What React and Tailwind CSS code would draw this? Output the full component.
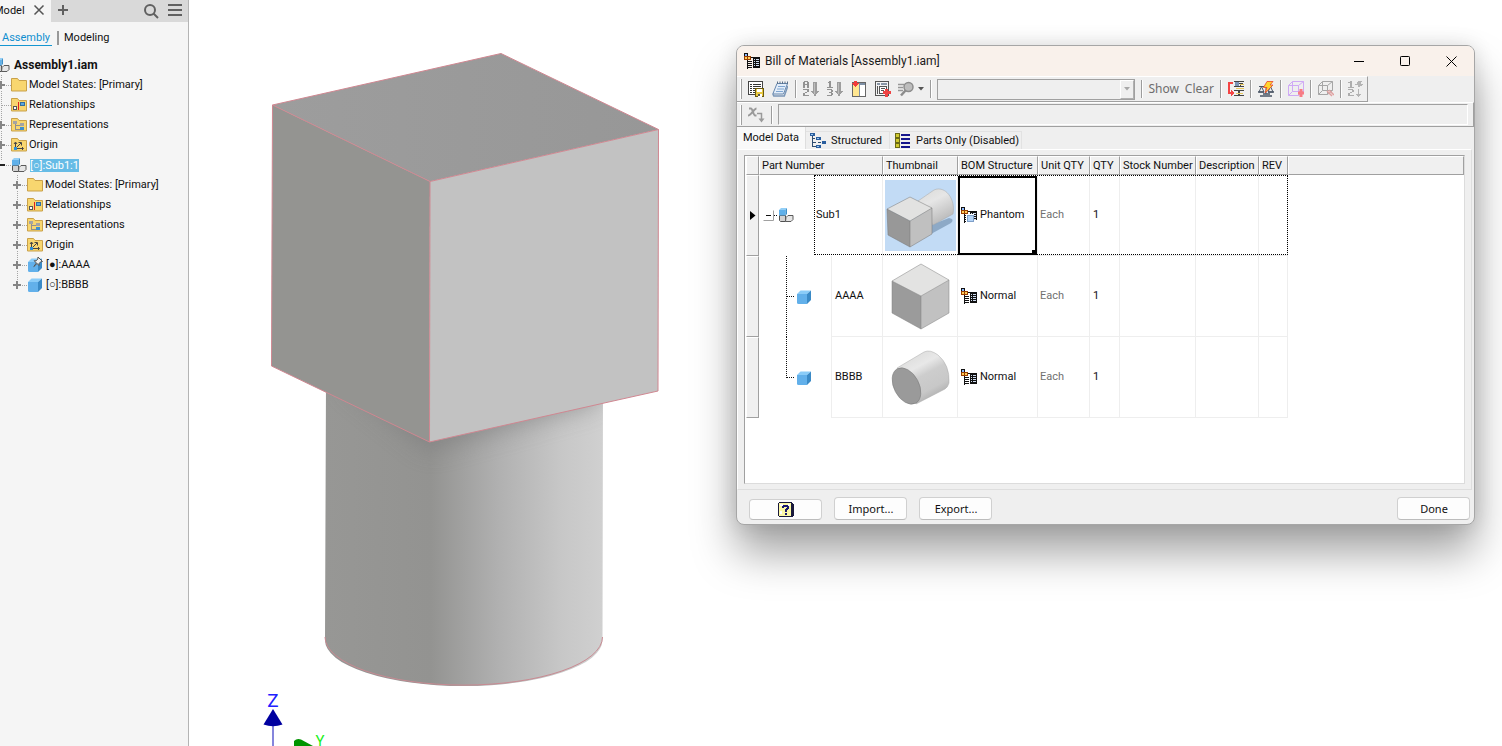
import React from "react";

/* ---------- tree icons ---------- */

function AssemblyIcon() {
  return (
    <svg width="16" height="16" viewBox="0 0 16 16" className="shrink-0" aria-hidden="true">
      <path d="M1.5 8.500h6v6h-5l-1-1z" fill="#d2d2d2" stroke="#505050" />
      <path d="M8 10.500l2-2h5v4l-2 2H7.500z" fill="#e6e6e6" stroke="#5a5a5a" />
      <path d="M1 3L3 1h6L7.500 3z" fill="#93cff7" />
      <path d="M1 3h6.500v5.500H1z" fill="#5fb0ea" />
      <path d="M7.500 3L9 1v6L7.500 8.500z" fill="#3c8fc9" />
    </svg>
  );
}

function PartIcon({ pinned = false }) {
  return (
    <svg width="16" height="16" viewBox="0 0 16 16" className="shrink-0" aria-hidden="true">
      <path d="M1 5L4.500 1.500H15L11 5z" fill="#8accf8" />
      <path d="M1 5h10v10H2.500Q1 15 1 13.500z" fill="#62b0ea" />
      <path d="M11 5l4-3.500V11l-4 4z" fill="#3a8ac6" />
      {pinned && (
        <path
          d="M11 0l4.500 4.500-1.800.3-1.700 1.800.2 1.900L10 6.500 6.800 9.600 9.400 6 7.200 3.700l2 .1 1.600-1.800z"
          fill="#f2f2f2"
          stroke="#555"
          strokeWidth="1"
        />
      )}
    </svg>
  );
}

function FolderIcon({ kind }) {
  return (
    <svg width="16" height="16" viewBox="0 0 16 16" className="shrink-0" aria-hidden="true">
      <path d="M.5 1.500h6l1.500 2h7.500v10.500H.5z" fill="#f8d66f" stroke="#c9a14a" />
      {kind === "relationships" && (
        <g shapeRendering="crispEdges">
          <path d="M2.500 9.500h3v3h-3z" fill="#fff" stroke="#555" />
          <path d="M7 5h1v8H7z" fill="#e02020" />
          <path d="M9.500 5.500h4v3h-4z" fill="#5ba7dd" stroke="#336f9f" />
        </g>
      )}
      {kind === "representations" && (
        <g shapeRendering="crispEdges">
          <path d="M4.500 6v6H9M5 8.500h4" fill="none" stroke="#8f8f8f" />
          <path d="M2 4h4v3H2zM9 6h4v3H9z" fill="#a4a4a4" />
          <path d="M9 10h4v3H9z" fill="#3f8fcd" />
        </g>
      )}
      {kind === "origin" && (
        <g fill="none" stroke="#444">
          <path d="M4.500 11V5.500M3 7l1.500-2L6 7M4.500 11.500H12M11 10l1.500 1.500L11 13M6 10l4-4M7.500 5.500h3v3" />
          <path d="M3 10h3v3H3z" fill="#2f8fd8" stroke="none" />
        </g>
      )}
    </svg>
  );
}

function Expander({ state, last = false }) {
  return (
    <svg width="15" height="20" viewBox="0 0 15 20" className="shrink-0" shapeRendering="crispEdges" aria-hidden="true">
      <path d={last ? "M5.500 0v10" : "M5.500 0v20"} stroke="#a5a5a5" strokeDasharray="1 1" />
      <path d="M6 10.500h9" stroke="#a5a5a5" strokeDasharray="1 1" />
      {state && <path d="M1 5h9v10H1z" fill="#f5f5f5" />}
      {state === "plus" && <path d="M1 9h8v2H1zM4 6h2v8H4z" fill="#858585" />}
      {state === "minus" && <path d="M1 9h8v2H1z" fill="#222" />}
    </svg>
  );
}

/* ---------- toolbar icons ---------- */

function Glyph({ children, size = 16 }) {
  return (
    <svg width={size} height={size} viewBox="0 0 16 16" className="shrink-0" shapeRendering="crispEdges" aria-hidden="true">
      {children}
    </svg>
  );
}

function BomIcon({ phantom = false }) {
  return (
    <svg width="17" height="16" viewBox="0 0 17 16" className="shrink-0" shapeRendering="crispEdges" aria-hidden="true">
      <path d="M0 0h4v4H0z" fill="#111" />
      <path d="M1 1h2v2H1z" fill="#8db8ff" />
      <path d="M0 3h7v4H0z" fill="#9a3c00" />
      <path d="M1 4h2v2H1zM4 4h2v2H4z" fill="#ffcf5a" />
      <path d="M3 7h1v9H3zM7 4h2v1H7zM4 8h4v1H4zM4 10h4v1H4zM4 12h4v1H4zM4 14h4v1H4z" fill="#111" />
      <path d="M9 4h7v11H9z" fill="#111" />
      <path d="M10 6h1v1h-1zM12 6h3v1h-3zM10 8h1v1h-1zM12 8h3v1h-3zM10 10h1v1h-1zM12 10h3v1h-3zM10 12h1v1h-1zM12 12h3v1h-3z" fill="#cfdcf0" />
      {phantom && (
        <g>
          <path d="M5 7h8v9H5zM13 13h3v3h-3z" fill="#fff" />
          <path d="M6.500 8.500h6v6h-6z" fill="#b3d3f6" stroke="#7f9fc8" />
        </g>
      )}
    </svg>
  );
}

const ExportSheetGlyph = () => (
  <Glyph>
    <path d="M.5.500h14v13H.5z" fill="#fff" stroke="#444" />
    <path d="M2 3h2v1H2zM5 3h8v1H5zM2 5h2v1H2zM5 5h8v1H5zM2 7h2v1H2zM5 7h3v1H5zM2 9h2v1H2zM5 9h2v1H5zM2 11h2v1H2zM5 11h2v1H5z" fill="#333" />
    <path d="M7.500 7.500h8v8h-8z" fill="#e8c840" stroke="#6b5a10" />
    <path d="M9 8h5v3H9zM10 13h4v3h-4z" fill="#fff" />
    <path d="M10 13h2v2h-2z" fill="#555" />
  </Glyph>
);

const NotepadGlyph = () => (
  <svg width="16" height="16" viewBox="0 0 16 16" aria-hidden="true">
    <path d="M5 2.500h10.500l-4 10.500H.8z" fill="#e3edf9" stroke="#6486ad" />
    <path d="M6 5.500h7M5 8h7M4 10.500h7" stroke="#7fa5d0" />
    <path d="M5.500.5v2.500M8 .5v2.500M10.500.5v2.500M13 .5v2.500M15.500.5v2.500" stroke="#5b6f88" />
    <path d="M.8 13l1 2h10.500l3.500-10" fill="none" stroke="#7b97b8" strokeWidth="1.500" />
  </svg>
);

const SortDownArrow = () => (
  <g>
    <path d="M10 1h4v9h2v1h-1v1h-1v1h-1v2h-2v-2h-1v-1H9v-1H8v-1h2z" fill="#9d9d9d" />
    <path d="M11 2h1v11h-1z" fill="#bdbdbd" />
  </g>
);

const SortAzGlyph = () => (
  <Glyph>
    <path d="M0 1h2v6H0zM1 0h4v1H1zM4 1h2v6H4zM2 3h2v1H2z" fill="#939393" />
    <path d="M0 8h6v1H0zM4 9h2v2H4zM2 11h2v1H2zM0 12h2v2H0zM0 14h6v1H0z" fill="#939393" />
    <SortDownArrow />
  </Glyph>
);

const Sort13Glyph = () => (
  <Glyph>
    <path d="M2 0h2v6H2zM1 1h1v1H1zM0 6h6v1H0z" fill="#939393" />
    <path d="M0 8h5v1H0zM4 9h2v2H4zM2 11h3v1H2zM4 12h2v2H4zM0 14h5v1H0z" fill="#939393" />
    <SortDownArrow />
  </Glyph>
);

const InsertColumnGlyph = () => (
  <Glyph>
    <path d="M1.500 1.500h13v14h-13z" fill="#fff" stroke="#666" />
    <path d="M2 3h6v12H2z" fill="#ffe690" />
    <path d="M8 2h1v13H8zM9 2h5v2H9z" fill="#7d8fa5" />
    <path d="M3 0h3v2h2v1H7v1H6v1H5v1H4V5H3V4H2V3H1V2h2z" fill="#f33b3b" />
  </Glyph>
);

const AddViewGlyph = () => (
  <Glyph>
    <path d="M.5.500h13v14H.5z" fill="#f4f4f4" stroke="#555" />
    <path d="M2 2h3v2H2zM6 2h6v2H6z" fill="#8a97a8" />
    <path d="M4.500 5.500h7v7h-7z" fill="#fff" stroke="#555" />
    <path d="M6 7h4v1H6zM6 9h3v1H6zM2 5h1v8H2z" fill="#555" />
    <path d="M10 8h3v2h3v3h-3v3h-3v-3H8v-3h2z" fill="#ef4444" />
  </Glyph>
);

const FindGlyph = () => (
  <svg width="16" height="16" viewBox="0 0 16 16" className="shrink-0" aria-hidden="true">
    <path d="M0 3.500h6M0 6.500h5M0 9.500h5" stroke="#979797" strokeWidth="1.500" />
    <circle cx="10.500" cy="6" r="4.500" fill="#bdbdbd" stroke="#8c8c8c" strokeWidth="1.500" />
    <path d="M7.500 9.500L3 14.500" stroke="#8c8c8c" strokeWidth="2.500" />
  </svg>
);

const RenumberGlyph = () => (
  <Glyph>
    <path d="M0 1h5v2H2v8h1V9l3 3-3 3v-2H0z" fill="#f44444" />
    <path d="M7 1h4v4H7z" fill="#7b93b5" />
    <path d="M6 0h10v1H6zM6 5h10v1H6zM6 9h10v1H6zM6 14h10v1H6zM11 2h4v1h-4zM12 3h1v2h-1zM10 10h2v4h-2z" fill="#444" />
    <path d="M12 3h4v1h-4zM8 7h8v1H8zM8 12h7v1H8z" fill="#e8c95c" />
  </Glyph>
);

const MassUpdateGlyph = () => (
  <svg width="16" height="16" viewBox="0 0 16 16" aria-hidden="true">
    <path d="M1 5.500h13M3.500 5.500L1 11h5zM12.500 5.500L10 11h5zM8 5v8" fill="none" stroke="#4a5665" />
    <path d="M0 11h6M10 11h6M2 15h12M5 13h7" stroke="#4a5665" strokeWidth="1.500" />
    <path d="M9 .5h6l-3 3.500h3l-8 8 2-5.500H5.500z" fill="#ffd62e" stroke="#e8452c" strokeWidth=".8" />
  </svg>
);

const CubeAddGlyph = () => (
  <svg width="16" height="16" viewBox="0 0 16 16" aria-hidden="true">
    <path d="M.5 4.500h10v10H.5zM.5 4.500l4-4h11l-5 4M15.500.500v10l-5 4M4.500.500v10h11M4.500 10.500l-4 4" fill="none" stroke="#cfaaf5" />
    <path d="M11.500 8h3v2.500H16v3h-1.500V16h-3v-2.500H10v-3h1.500z" fill="#f77c84" />
  </svg>
);

const CubeLinkGlyph = () => (
  <svg width="16" height="16" viewBox="0 0 16 16" aria-hidden="true">
    <path d="M.5 4.500h9v9h-9zM.5 4.500l4-4h10l-5 4M14.500.500v9l-5 4M4.500.500v9h10M4.500 9.500l-4 4" fill="none" stroke="#a6a6a6" />
    <path d="M9 10l5 5M11 9l5 5" stroke="#e0a0a0" strokeWidth="1.500" />
  </svg>
);

const ItemOrderGlyph = () => (
  <Glyph>
    <path d="M2 0h2v6H2zM0 1h2v1H0zM0 6h6v1H0zM0 8h5v1H0zM4 9h2v2H4zM2 11h2v1H2zM0 12h2v2H0zM0 14h6v1H0z" fill="#adadad" />
    <path d="M10 0h4v1h-1v2h2v1h-1v1h-2v1h-2V4H7V3h2V1h1zM10 8h1v5h2v1h-1v1h-1v1h-1v-1H9v-1H8v-1h2z" fill="#b4b4b4" />
  </Glyph>
);

const FormulaGlyph = () => (
  <svg width="18" height="16" viewBox="0 0 18 16" aria-hidden="true">
    <path d="M2 1.500h2c1.500 0 2.500 7 4 7h1.500M9.500 1.500C7 1.500 4 8.500 1 8.500" fill="none" stroke="#9a9a9a" strokeWidth="2" />
    <path d="M10 6.500h4.500V13" fill="none" stroke="#9a9a9a" strokeWidth="1.500" />
    <path d="M11.500 11.500h6L14.500 15.500z" fill="#9a9a9a" />
  </svg>
);

const StructuredGlyph = () => (
  <Glyph>
    <path d="M0 0h5v3H0zM6 4h5v3H6zM6 12h5v3H6zM12 8h4v3h-4z" fill="#2a5e9e" />
    <path d="M2 3h1v11H2zM3 5h2v1H3zM3 9h3v1H3zM3 13h3v1H3zM8 9h3v1H8z" fill="#2e4d70" />
    <path d="M1 1h2v1H1zM7 5h2v1H7zM7 13h2v1H7z" fill="#9cc9f2" />
  </Glyph>
);

const PartsOnlyGlyph = () => (
  <Glyph>
    <path d="M0 0h5v15H0z" fill="#6a6814" />
    <path d="M1 1h3v3H1zM1 6h3v3H1zM1 11h3v3H1z" fill="#cfc92e" />
    <path d="M6 1h9v2H6zM6 5h9v2H6zM6 9h9v2H6zM6 13h9v2H6z" fill="#15158c" />
  </Glyph>
);

const HelpGlyph = () => (
  <Glyph>
    <path d="M1 0h13v1h1v1h1v12h-1v1H1v-1H0V1h1z" fill="#1a1a3c" />
    <path d="M1 1h12v13H1z" fill="#fdf9a6" />
    <path d="M2 2h3v2H2zM10 2h2v2h-2zM2 9h2v3H2z" fill="#fff" />
    <path d="M5 3h5v1h1v3h-1v1H9v2H7V7h1V6h1V5H6v1H4V4h1zM7 11h2v2H7z" fill="#191970" />
  </Glyph>
);

/* ---------- model browser ---------- */

const folders = [
  { label: "Model States: [Primary]", kind: "states", state: "plus" },
  { label: "Relationships", kind: "relationships" },
  { label: "Representations", kind: "representations", state: "plus" },
  { label: "Origin", kind: "origin", state: "plus" },
];

function TreeRow({ state, last, icon, children }) {
  return (
    <div className="flex h-5 items-center whitespace-nowrap">
      <Expander state={state} last={last} />
      {icon}
      {children}
    </div>
  );
}

function ModelBrowser() {
  return (
    <aside className="w-[189px] shrink-0 overflow-hidden border-r border-[#b4b4b4] bg-[#f5f5f5]">
      <div className="flex h-[22px] items-stretch bg-[#d9d9d9]">
        <div className="flex w-[51px] items-center justify-between bg-[#f5f5f5] pr-1.5">
          <span className="-ml-1.5">Model</span>
          <button aria-label="Close tab" className="-mt-0.5">
            <svg width="12" height="12" viewBox="0 0 12 12">
              <path d="M1.500 1.500l9 9M10.500 1.500l-9 9" stroke="#555" strokeWidth="1.500" />
            </svg>
          </button>
        </div>
        <button aria-label="Add tab" className="px-1.5 pb-0.5">
          <svg width="12" height="12" viewBox="0 0 12 12" shapeRendering="crispEdges">
            <path d="M5 1h2v10H5zM1 5h10v2H1z" fill="#606060" />
          </svg>
        </button>
        <button aria-label="Search" className="ml-auto pr-2 pb-0.5">
          <svg width="17" height="17" viewBox="0 0 17 17" fill="none" stroke="#606060" strokeWidth="2">
            <circle cx="7" cy="8" r="5" />
            <path d="M10.500 11.500l4.500 4.500" />
          </svg>
        </button>
        <button aria-label="Menu" className="pr-1.5 pb-0.5">
          <svg width="14" height="12" viewBox="0 0 14 12" shapeRendering="crispEdges">
            <path d="M0 0h14v2H0zM0 5h14v2H0zM0 10h14v2H0z" fill="#606060" />
          </svg>
        </button>
      </div>
      <nav className="mt-[7px] mb-[9px] flex h-[17px] items-stretch">
        <a href="#assembly" className="w-[52px] border-b border-[#1596d1] pl-0.5 leading-[17px] text-[#0f8fd0]">
          Assembly
        </a>
        <span className="ml-[5px] h-[14px] w-0.5 self-center bg-[#999]" />
        <a href="#modeling" className="ml-[5px] leading-[17px]">
          Modeling
        </a>
      </nav>
      <div className="-ml-1.5 flex h-5 items-center gap-1 text-xs font-bold">
        <AssemblyIcon />
        Assembly1.iam
      </div>
      <ul className="-ml-1">
        {folders.map((f) => (
          <li key={f.label}>
            <TreeRow state={f.state} icon={<FolderIcon kind={f.kind} />}>
              <span className="pl-0.5">{f.label}</span>
            </TreeRow>
          </li>
        ))}
        <li>
          <TreeRow state="minus" last icon={<AssemblyIcon />}>
            <span className="ml-[3px] bg-[#66bce6] leading-[13px] text-white">[○]:Sub1:1</span>
          </TreeRow>
          <ul className="pl-4">
            {folders.map((f) => (
              <li key={f.label}>
                <TreeRow state="plus" icon={<FolderIcon kind={f.kind} />}>
                  <span className="pl-0.5">{f.label}</span>
                </TreeRow>
              </li>
            ))}
            <li>
              <TreeRow state="plus" icon={<PartIcon pinned />}>
                <span className="pl-[3px]">[●]:AAAA</span>
              </TreeRow>
            </li>
            <li>
              <TreeRow state="plus" last icon={<PartIcon />}>
                <span className="pl-[3px]">[○]:BBBB</span>
              </TreeRow>
            </li>
          </ul>
        </li>
      </ul>
    </aside>
  );
}

/* ---------- 3D view ---------- */

function ModelView() {
  return (
    <svg
      viewBox="189 0 1313 746"
      preserveAspectRatio="xMinYMin meet"
      className="absolute inset-0 h-full w-full"
      role="img"
      aria-label="Box on a cylinder"
    >
      <defs>
        <linearGradient id="cyl" x1="0" x2="1" y1="0" y2="0">
          <stop offset="0" stopColor="#979795" />
          <stop offset="0.380" stopColor="#939391" />
          <stop offset="0.620" stopColor="#b0b0b0" />
          <stop offset="0.850" stopColor="#c7c7c7" />
          <stop offset="1" stopColor="#d0d0d0" />
        </linearGradient>
        <linearGradient id="top" x1="0" x2="1" y1="0" y2="0">
          <stop offset="0" stopColor="#9d9d9d" />
          <stop offset="1" stopColor="#979797" />
        </linearGradient>
        <clipPath id="cylClip">
          <path d="M326 380H603L602.500 640H325z" />
        </clipPath>
        <filter id="soft" x="-20%" y="-50%" width="140%" height="200%">
          <feGaussianBlur stdDeviation="12" />
        </filter>
      </defs>
      <path d="M326 380H603L602.500 640A138.500 46 0 0 1 325 640z" fill="url(#cyl)" />
      <g clipPath="url(#cylClip)">
        <path d="M340 380L429 450L600 403V380z" fill="#7a7a7a" opacity="0.600" filter="url(#soft)" />
      </g>
      <path d="M325 637A138.500 48 0 0 0 602.500 637" fill="none" stroke="#c98a92" />
      <path d="M272.500 105L501 53.500L658.500 129.500L430 181.500z" fill="url(#top)" />
      <path d="M272.500 105L430 181.500L429.500 442L271.500 366z" fill="#949491" />
      <path d="M430 181.500L658.500 129.500L658 391L429.500 442z" fill="#c2c2c2" />
      <path
        d="M272.500 105L501 53.500L658.500 129.500L430 181.500zM272.500 105L271.500 366L429.500 442L658 391L658.500 129.500M430 181.500L429.500 442"
        fill="none"
        stroke="#d08791"
      />
      <text x="273" y="707" textAnchor="middle" fontSize="19" fill="#2020ff">Z</text>
      <path d="M273 725V746" stroke="#5c5cd0" strokeWidth="1.500" />
      <path d="M273 709L282.500 724.500Q273 728 263.500 724.500z" fill="#0000a0" />
      <path d="M294 746V741Q297 738 301 739.500L313 746z" fill="#009400" />
      <text x="320" y="746" textAnchor="middle" fontSize="15" fill="#20f020">Y</text>
    </svg>
  );
}

/* ---------- bill of materials ---------- */

function ToolButton({ label, children, width = "w-6" }) {
  return (
    <button aria-label={label} title={label} className={`flex h-[22px] shrink-0 items-center justify-center gap-1 ${width}`}>
      {children}
    </button>
  );
}

function Separator() {
  return <span className="mx-[3px] h-[18px] w-px shrink-0 bg-[#9c9c9c] shadow-[1px_0_0_#fff]" />;
}

function Grip() {
  return <span className="mr-0.5 ml-[3px] h-5 w-0.5 shrink-0 border-r border-[#a0a0a0] bg-white" />;
}

function Toolbar() {
  return (
    <div className="flex h-[26px] w-[631px] items-center border-t border-r border-b border-t-white border-r-[#a0a0a0] border-b-[#a0a0a0]">
      <Grip />
      <ToolButton label="Export bill of materials"><ExportSheetGlyph /></ToolButton>
      <ToolButton label="Engineer's notebook"><NotepadGlyph /></ToolButton>
      <Separator />
      <ToolButton label="Sort items"><SortAzGlyph /></ToolButton>
      <ToolButton label="Renumber items"><Sort13Glyph /></ToolButton>
      <ToolButton label="Choose columns"><InsertColumnGlyph /></ToolButton>
      <ToolButton label="Add custom column"><AddViewGlyph /></ToolButton>
      <ToolButton label="Find" width="w-8">
        <FindGlyph />
        <svg width="6" height="4" viewBox="0 0 6 4" aria-hidden="true"><path d="M0 0h6L3 3.500z" fill="#555" /></svg>
      </ToolButton>
      <Separator />
      <div className="mx-[3px] flex h-[21px] flex-1 border border-[#a0a0a0]">
        <select
          aria-label="Property value"
          disabled
          className="h-full min-w-0 flex-1 appearance-none bg-[#efefef]"
        />
        <span className="flex w-3.5 items-center justify-center border border-t-white border-r-[#b0b0b0] border-b-[#b0b0b0] border-l-white">
          <svg width="6" height="4" viewBox="0 0 6 4" aria-hidden="true"><path d="M0 0h6L3 3.500z" fill="#a8a8a8" /></svg>
        </span>
      </div>
      <Separator />
      <button className="mx-[3px] font-['Noto_Sans',sans-serif] text-xs text-[#6d6d6d]">Show</button>
      <button className="mx-[3px] font-['Noto_Sans',sans-serif] text-xs text-[#6d6d6d]">Clear</button>
      <Separator />
      <ToolButton label="Update order" width="w-[23px]"><RenumberGlyph /></ToolButton>
      <Separator />
      <ToolButton label="Update mass properties" width="w-[23px]"><MassUpdateGlyph /></ToolButton>
      <Separator />
      <ToolButton label="Add virtual component" width="w-[23px]"><CubeAddGlyph /></ToolButton>
      <Separator />
      <ToolButton label="Merge rows" width="w-[23px]"><CubeLinkGlyph /></ToolButton>
      <Separator />
      <ToolButton label="Item order" width="w-[23px]"><ItemOrderGlyph /></ToolButton>
    </div>
  );
}

function FormulaBar() {
  return (
    <div className="flex h-[25px] items-center border-t border-r border-b border-t-white border-r-[#a0a0a0] border-b-[#a0a0a0] pr-[5px]">
      <Grip />
      <ToolButton label="Insert expression"><FormulaGlyph /></ToolButton>
      <Separator />
      <input
        aria-label="Expression"
        readOnly
        className="ml-[3px] h-[21px] min-w-0 flex-1 border border-t-[#a0a0a0] border-r-white border-b-white border-l-[#a0a0a0] bg-[#efefef] px-1"
      />
    </div>
  );
}

function Tabs() {
  return (
    <div role="tablist" className="flex h-[22px] items-end">
      <button role="tab" aria-selected="true" className="h-[22px] w-[69px] border-r border-[#dedede] bg-[#f9f9f9] text-center">
        Model Data
      </button>
      <button role="tab" aria-selected="false" className="flex h-[18px] w-[84px] items-center gap-[5px] border-t border-r border-[#e2e2e2] pl-1">
        <StructuredGlyph />
        Structured
      </button>
      <button role="tab" aria-selected="false" className="flex h-[18px] w-[132px] items-center gap-[5px] border-t border-r border-[#e2e2e2] pl-[5px]">
        <PartsOnlyGlyph />
        Parts Only (Disabled)
      </button>
    </div>
  );
}

function SubThumb() {
  return (
    <svg width="71" height="71" viewBox="0 0 71 71" className="block" role="img" aria-label="Sub1 thumbnail">
      <defs>
        <linearGradient id="tube" x1="0.200" y1="0" x2="0.700" y2="1">
          <stop offset="0" stopColor="#dcdcda" />
          <stop offset="0.350" stopColor="#e6e6e6" />
          <stop offset="0.650" stopColor="#cfcfcf" />
          <stop offset="1" stopColor="#b4b4b4" />
        </linearGradient>
      </defs>
      <path d="M0 0h71v71H0z" fill="#c2dbf5" />
      <path d="M46 45L64 38Q70 39 66 43L46 54z" fill="#8da9c6" />
      <path d="M33 21L49 10C60 5 71 19 68 34L48 45z" fill="url(#tube)" stroke="#a9a9a9" strokeWidth=".5" />
      <path d="M25 17L47 28L25 41L2 29z" fill="#e2e2e1" />
      <path d="M2 29L25 41V67L3 55z" fill="#989898" />
      <path d="M25 41L47 28V54L25 67z" fill="#c0c0c0" />
      <path d="M25 17L47 28V54L25 67L3 55L2 29zM2 29L25 41L47 28M25 41V67" fill="none" stroke="#777" strokeWidth=".5" />
    </svg>
  );
}

function BoxThumb() {
  return (
    <svg width="71" height="71" viewBox="0 0 71 71" className="block" role="img" aria-label="AAAA thumbnail">
      <path d="M36 3L64 19L36 35L7 20z" fill="#e3e3e2" />
      <path d="M7 20L36 35V68L7 52z" fill="#9b9b9b" />
      <path d="M36 35L64 19V52L36 68z" fill="#c1c1c1" />
      <path d="M36 3L64 19V52L36 68L7 52V20zM7 20L36 35L64 19M36 35V68" fill="none" stroke="#808080" strokeWidth=".5" />
    </svg>
  );
}

function CylinderThumb() {
  return (
    <svg width="71" height="71" viewBox="0 0 71 71" className="block" role="img" aria-label="BBBB thumbnail">
      <defs>
        <linearGradient id="drum" x1="0.250" y1="0.050" x2="0.700" y2="0.900">
          <stop offset="0" stopColor="#dcdcdb" />
          <stop offset="0.300" stopColor="#e8e8e8" />
          <stop offset="0.500" stopColor="#cdcdcd" />
          <stop offset="0.800" stopColor="#c8c8c8" />
          <stop offset="1" stopColor="#b0b0b0" />
        </linearGradient>
      </defs>
      <path d="M12 26L39 10Q45 7 53 13Q65 23 64 41Q63 45 60 47L31 62z" fill="url(#drum)" stroke="#aaa" strokeWidth=".5" />
      <ellipse cx="21.500" cy="44" rx="12.500" ry="19.500" transform="rotate(-28 21.500 44)" fill="#9a9a9a" stroke="#777" strokeWidth=".5" />
    </svg>
  );
}

const columns = ["Thumbnail", "BOM Structure", "Unit QTY", "QTY", "Stock Number", "Description", "REV"];

const rows = [
  { part: "Sub1", structure: "Phantom", thumb: <SubThumb />, root: true },
  { part: "AAAA", structure: "Normal", thumb: <BoxThumb /> },
  { part: "BBBB", structure: "Normal", thumb: <CylinderThumb />, last: true },
];

const headCell =
  "h-[19px] overflow-hidden border-t border-l border-r border-b border-t-white border-l-white border-r-[#a0a0a0] border-b-[#a0a0a0] bg-[#f0f0f0] p-0 pl-0.5 text-left font-normal whitespace-nowrap leading-4";
const bodyCell = "border-r border-b border-[#eeeeee] p-0 align-middle";

function PartCell({ row }) {
  if (row.root) {
    return (
      <div className="relative flex h-20 items-center">
        <svg width="55" height="20" viewBox="0 0 55 20" className="shrink-0" aria-hidden="true">
          <path d="M4.500 15.500h10v-10" fill="none" stroke="#a0a0a0" />
          <path d="M7 10h5v1H7z" fill="#111" />
          <path d="M15 10.500h4" stroke="#111" strokeDasharray="1 1" />
        </svg>
        <span className="-ml-9 w-9">
          <AssemblyIcon />
        </span>
        <span className="pl-0.5">{row.part}</span>
        <span className="pointer-events-none absolute top-0 left-[55px] h-20 w-[474px] border border-dotted border-black" />
      </div>
    );
  }
  return (
    <div className="flex h-[81px] items-center">
      <svg width="37" height="81" viewBox="0 0 37 81" className="shrink-0" shapeRendering="crispEdges" aria-hidden="true">
        <path d={row.last ? "M27.500 0v41" : "M27.500 0v81"} stroke="#111" strokeDasharray="1 1" />
        <path d="M28 40.500h7" stroke="#111" strokeDasharray="1 1" />
      </svg>
      <PartIcon />
      <span className="ml-[19px] flex flex-1 items-center self-stretch border-b border-l border-[#eeeeee] pl-[3px]">
        {row.part}
      </span>
    </div>
  );
}

function BomTable() {
  return (
    <table className="w-full table-fixed border-separate border-spacing-0">
      <colgroup>
        <col className="w-[13px]" />
        <col className="w-[124px]" />
        <col className="w-[75px]" />
        <col className="w-[80px]" />
        <col className="w-[52px]" />
        <col className="w-[30px]" />
        <col className="w-[76px]" />
        <col className="w-[63px]" />
        <col className="w-[29px]" />
        <col />
      </colgroup>
      <thead>
        <tr>
          <th className={headCell} aria-label="Row" />
          <th className={headCell}>Part Number</th>
          {columns.map((c) => (
            <th key={c} className={headCell}>
              {c}
            </th>
          ))}
          <th className={headCell} aria-label="Unused" />
        </tr>
      </thead>
      <tbody>
        {rows.map((row) => (
          <tr key={row.part}>
            <td className="h-[81px] border border-t-white border-r-[#a0a0a0] border-b-[#a0a0a0] border-l-white bg-[#f0f0f0] p-0">
              {row.root && (
                <svg width="6" height="10" viewBox="0 0 6 10" className="mx-auto" aria-hidden="true">
                  <path d="M0 0l5.500 4.500L0 9z" fill="#000" />
                </svg>
              )}
            </td>
            <td className="border-r border-[#eeeeee] p-0 align-top">
              <PartCell row={row} />
            </td>
            <td className={`${bodyCell} pl-0.5`}>{row.thumb}</td>
            <td className={bodyCell}>
              <div
                className={
                  row.root
                    ? "relative flex h-[79px] items-center gap-0.5 border-2 border-black pl-px"
                    : "flex h-20 items-center gap-0.5 pl-[3px]"
                }
              >
                <BomIcon phantom={row.root} />
                {row.structure}
                {row.root && <span className="absolute right-0 bottom-0 h-[3px] w-[3px] bg-black" />}
              </div>
            </td>
            <td className={`${bodyCell} pl-0.5 text-[#707070]`}>Each</td>
            <td className={`${bodyCell} pl-[3px]`}>1</td>
            <td className={bodyCell} />
            <td className={bodyCell} />
            <td className={bodyCell} />
            <td className="p-0" />
          </tr>
        ))}
      </tbody>
    </table>
  );
}

function DialogButton({ children, label, className = "h-[23px]" }) {
  return (
    <button
      aria-label={label}
      className={`flex w-[73px] items-center justify-center rounded border border-[#d0d0d0] border-b-[#bcbcbc] bg-[#fdfdfd] pl-px font-['Noto_Sans',sans-serif] ${className}`}
    >
      {children}
    </button>
  );
}

function BomDialog() {
  return (
    <section
      role="dialog"
      aria-label="Bill of Materials"
      className="absolute top-[45px] left-[547px] w-[739px] overflow-hidden rounded-lg border border-[#a6a6a6] bg-[#efefef] shadow-[0_28px_44px_rgba(0,0,0,0.36),0_0_20px_rgba(0,0,0,0.12)]"
    >
      <header className="flex h-[30px] items-center bg-[#f9f1eb] pl-[7px]">
        <BomIcon />
        <h1 className="ml-1 text-xs text-[#1a1a1a]">Bill of Materials [Assembly1.iam]</h1>
        <div className="ml-auto flex">
          <button aria-label="Minimize" className="flex h-[30px] w-[46px] items-center justify-center">
            <svg width="10" height="10" viewBox="0 0 10 10" shapeRendering="crispEdges"><path d="M0 5h10v1H0z" fill="#000" /></svg>
          </button>
          <button aria-label="Maximize" className="flex h-[30px] w-[46px] items-center justify-center">
            <svg width="10" height="10" viewBox="0 0 10 10"><rect x=".5" y=".5" width="9" height="9" rx=".8" fill="none" stroke="#000" /></svg>
          </button>
          <button aria-label="Close" className="flex h-[30px] w-[46px] items-center justify-center">
            <svg width="11" height="11" viewBox="0 0 11 11"><path d="M.5.500l10 10M10.500.500l-10 10" stroke="#000" /></svg>
          </button>
        </div>
      </header>
      <Toolbar />
      <FormulaBar />
      <Tabs />
      <div className="mr-0.5 border border-t-white border-r-[#dedede] border-b-[#dedede] border-l-white pt-[5px] pr-[6px] pb-[5px] pl-[6px]">
        <div className="min-h-[329px] border border-t-[#a0a0a0] border-r-[#dcdcdc] border-b-[#dcdcdc] border-l-[#a0a0a0] bg-white pl-px">
          <BomTable />
        </div>
      </div>
      <footer className="flex items-end gap-3 px-3 pt-[7px] pb-1">
        <DialogButton label="Help" className="h-[21px]"><HelpGlyph /></DialogButton>
        <DialogButton>Import...</DialogButton>
        <DialogButton>Export...</DialogButton>
        <span className="flex-1" />
        <span className="-mr-2">
          <DialogButton>Done</DialogButton>
        </span>
      </footer>
    </section>
  );
}

export default function App() {
  return (
    <div className="flex min-h-screen overflow-hidden bg-white font-['Roboto','Noto_Sans',sans-serif] text-[11px] leading-4 text-[#111]">
      <ModelBrowser />
      <main className="relative flex-1">
        <ModelView />
        <BomDialog />
      </main>
    </div>
  );
}
